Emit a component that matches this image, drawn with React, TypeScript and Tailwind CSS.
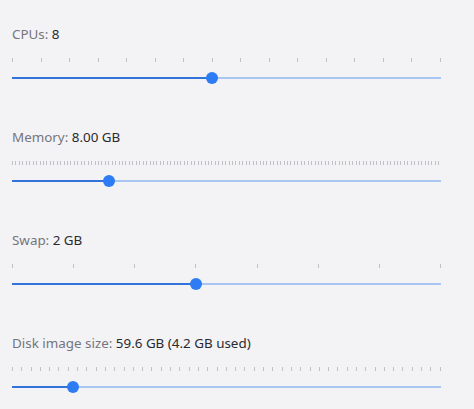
import React from "react"

type SliderRow = {
  label: string
  value: string
  min: number
  max: number
  step: number
  current: number
}

const rows: SliderRow[] = [
  { label: "CPUs:", value: "8", min: 1, max: 16, step: 1, current: 8 },
  { label: "Memory:", value: "8.00 GB", min: 1, max: 32, step: 0.25, current: 8 },
  { label: "Swap:", value: "2 GB", min: 0.5, max: 4, step: 0.5, current: 2 },
  { label: "Disk image size:", value: "59.6 GB (4.2 GB used)", min: 16, max: 384, step: 8, current: 68 },
]

function Slider({ row }: { row: SliderRow }) {
  const count = Math.round((row.max - row.min) / row.step) + 1
  const pct = ((row.current - row.min) / (row.max - row.min)) * 100

  return (
    <div className="pt-[25px] pb-[19px]">
      <div className="h-[18px] text-[13.4px] leading-[18px]">
        <span className="text-[#75757b]">{row.label} </span>
        <span className="text-[#2a2a2e]">{row.value}</span>
      </div>
      <div className="mt-[15px] flex h-1 w-[429px] justify-between">
        {Array.from({ length: count }).map((_, i) => (
          <div key={i} className="h-1 w-px bg-[#c0c0c5]" />
        ))}
      </div>
      <div className="relative mt-[10px] flex h-3 w-[429px] items-center">
        <div className="h-[2px] bg-[#3273d9]" style={{ width: `${pct}%` }} />
        <div className="h-[2px] flex-1 bg-[#a9c5f1]" />
        <div
          className="absolute top-0 h-3 w-3 -translate-x-1/2 rounded-full bg-[#2d7cf3]"
          style={{ left: `${pct}%` }}
        />
      </div>
    </div>
  )
}

export default function App() {
  return (
    <div
      className="h-[409px] w-[474px] overflow-hidden bg-[#f3f3f6] px-3"
      style={{ fontFamily: '"Noto Sans", "Open Sans", sans-serif' }}
    >
      {rows.map((row) => (
        <Slider key={row.label} row={row} />
      ))}
    </div>
  )
}
